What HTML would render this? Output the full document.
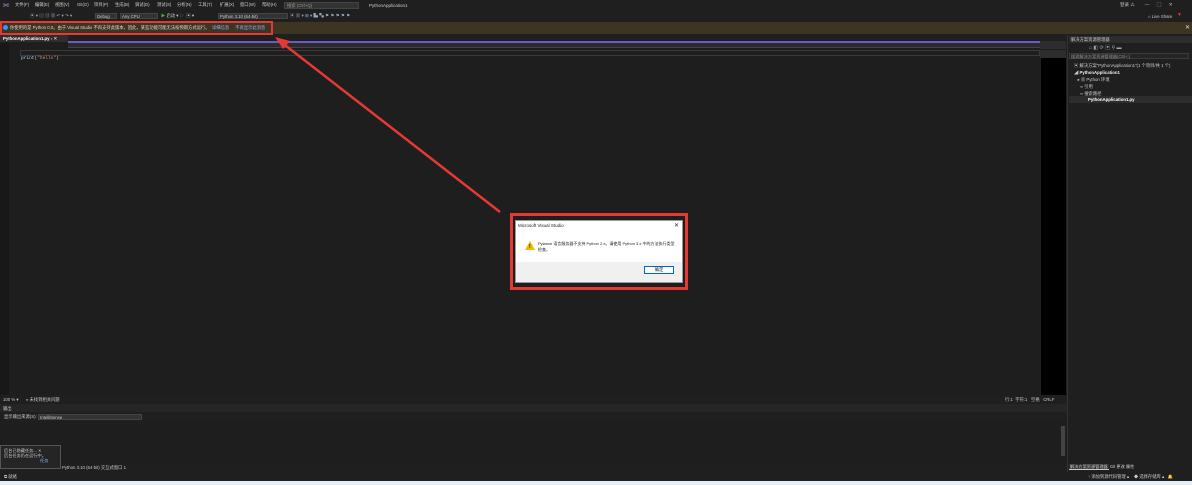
<!DOCTYPE html>
<html><head><meta charset="utf-8"><style>
*{margin:0;padding:0;box-sizing:border-box}
body{width:1192px;height:485px;background:#1f1f1f;overflow:hidden;position:relative;font-family:"Liberation Sans","Noto Sans CJK SC",sans-serif;font-size:5px;color:#ccc}
.a{position:absolute;white-space:nowrap}
.m{position:absolute;top:2px;font-size:4.3px;white-space:nowrap}
</style></head><body>
<!-- menu bar -->
<div class="a" style="left:0;top:0;width:1192px;height:10px;background:#1f1f1f"></div>
<div class="a" style="left:3px;top:2px;color:#b180d7;font-size:6px">⋈</div>
<span class="m" style="left:15px">文件(F)</span><span class="m" style="left:35px">编辑(E)</span><span class="m" style="left:55px">视图(V)</span><span class="m" style="left:77px">Git(G)</span><span class="m" style="left:94px">项目(P)</span><span class="m" style="left:115px">生成(B)</span><span class="m" style="left:135px">调试(D)</span><span class="m" style="left:157px">测试(S)</span><span class="m" style="left:177px">分析(N)</span><span class="m" style="left:198px">工具(T)</span><span class="m" style="left:220px">扩展(X)</span><span class="m" style="left:240px">窗口(W)</span><span class="m" style="left:262px">帮助(H)</span>
<div class="a" style="left:284px;top:2px;width:75px;height:7px;background:#333;border:1px solid #444;color:#999;padding-left:2px;font-size:4.3px">搜索 (Ctrl+Q)</div>
<div class="a" style="left:369px;top:3px;font-size:4.5px">PythonApplication1</div>
<div class="a" style="left:1120px;top:2px;font-size:4.5px">登录 ⁂ &nbsp;&nbsp;&nbsp;&nbsp;&nbsp;&nbsp;&nbsp;— &nbsp;&nbsp;&nbsp;&nbsp;&nbsp;▢ &nbsp;&nbsp;&nbsp;&nbsp;&nbsp;✕</div>
<!-- toolbar -->
<div class="a" style="left:95px;top:13px;width:22px;height:6px;background:#333;border:1px solid #444;font-size:4.3px;padding-left:1px">Debug</div>
<div class="a" style="left:120px;top:13px;width:38px;height:6px;background:#333;border:1px solid #444;font-size:4.3px;padding-left:1px">Any CPU</div>
<div class="a" style="left:161px;top:13px;font-size:4.3px"><span style="color:#4caf50">▶</span> 启动 ▾ <span style="color:#4caf50">▷</span> &nbsp;▣ ▾</div>
<div class="a" style="left:218px;top:13px;width:70px;height:6px;background:#333;border:1px solid #444;font-size:4.3px;padding-left:1px">Python 3.10 (64-bit)</div>
<div class="a" style="left:30px;top:13px;width:60px;height:6px;color:#9ab;font-size:4.5px">▣ ▾ ▤ ▥ ▦ ↶ ▾ ↷ ▾</div>
<div class="a" style="left:290px;top:13px;color:#9ab;font-size:4.5px">▣ ▦ ▾ ⊞ ▾ ▙ ▚ ⚑ ⚑ ⚑ ⚑ ⚑</div>
<div class="a" style="left:1148px;top:14px;font-size:4.3px">⌂ Live Share</div>
<div class="a" style="left:1177px;top:12px;color:#e33;font-size:5px">▼</div>
<!-- info bar -->
<div class="a" style="left:0;top:22px;width:1192px;height:12px;background:#3d3421"></div>
<div class="a" style="left:3px;top:25px;width:5px;height:5px;border-radius:50%;background:#3794ff"></div>
<div class="a" style="left:10px;top:25px;font-size:4.3px;color:#ddd">你使用的是 Python 0.0。由于 Visual Studio 不再支持此版本，因此，某些功能可能无法按预期方式运行。</div>
<div class="a" style="left:212px;top:25px;font-size:4.3px;color:#8ab4f8">详细信息 &nbsp;&nbsp;&nbsp;&nbsp;不再显示此消息</div>
<div class="a" style="left:1185px;top:24px;font-size:6px;color:#ddd">✕</div>
<div class="a" style="left:0;top:21px;width:273px;height:14px;border:2px solid #e53935"></div>
<!-- tab row -->
<div class="a" style="left:0;top:35px;width:68px;height:7px;background:#2d2d2d;font-size:4.3px;padding:1px 0 0 3px;color:#fff;font-weight:bold">PythonApplication1.py <span style="font-weight:normal">▫ ✕</span></div>
<div class="a" style="left:68px;top:41px;width:972px;height:2px;background:#6a5acd"></div>
<div class="a" style="left:1040px;top:41px;width:26px;height:8px;background:#2d2d2d"></div>
<!-- editor -->
<div class="a" style="left:0;top:43px;width:1040px;height:352px;background:#1e1e1e"></div>
<div class="a" style="left:0;top:43px;width:9px;height:352px;background:#181818"></div>
<div class="a" style="left:68px;top:43px;width:972px;height:5px;background:#2b2b2b;border-bottom:1px solid #444"></div>
<div class="a" style="left:20px;top:50px;width:1020px;height:6px;border:1px solid #3a3a3a"></div>
<div class="a" style="left:21px;top:56px;font-family:'Liberation Mono',monospace;font-size:4.5px;color:#9cdcfe">print<span style="color:#ccc">(</span><span style="color:#ce9178">"hello"</span><span style="color:#ccc">)</span></div>
<div class="a" style="left:1040px;top:50px;width:26px;height:8px;background:#2d2d2d"></div>
<div class="a" style="left:1041px;top:58px;width:25px;height:337px;background:#000"></div>
<!-- editor status -->
<div class="a" style="left:0;top:395px;width:1067px;height:8px;background:#1f1f1f;font-size:4.3px;padding:2px 0 0 3px">100 % ▾ &nbsp;&nbsp;&nbsp;&nbsp;&nbsp;<span style="color:#4caf50">●</span> 未找到相关问题</div>
<div class="a" style="left:1005px;top:397px;font-size:4.3px">行:1 &nbsp;字符:1 &nbsp;&nbsp;空格 &nbsp;&nbsp;CRLF</div>
<!-- output panel -->
<div class="a" style="left:0;top:404px;width:1067px;height:8px;background:#252526;font-size:4.3px;padding:2px 0 0 3px">输出</div>
<div class="a" style="left:0;top:412px;width:1067px;height:9px;background:#1f1f1f;font-size:4.3px;padding:2px 0 0 4px">显示输出来源(S): </div>
<div class="a" style="left:38px;top:414px;width:104px;height:6px;background:#333;border:1px solid #444;font-size:4.3px;padding-left:1px">IntelliSense</div>
<div class="a" style="left:0;top:421px;width:1067px;height:42px;background:#1e1e1e"></div>
<div class="a" style="left:1061px;top:426px;width:4px;height:30px;background:#444"></div>
<div class="a" style="left:0;top:463px;width:1067px;height:8px;background:#1f1f1f;font-size:4.3px;padding:2px 0 0 62px">Python 3.10 (64-bit) 交互式窗口 1</div>
<!-- notification -->
<div class="a" style="left:0;top:445px;width:61px;height:24px;background:#252526;border:1px solid #555;font-size:4.2px;padding:2px 3px;line-height:5px;white-space:normal">后台已隐藏任务... ✕<br>后台任务仍在运行中。<br><span style="color:#8ab4f8;padding-left:36px">任务</span></div>
<!-- right panel -->
<div class="a" style="left:1067px;top:35px;width:125px;height:437px;background:#1f1f1f;border-left:1px solid #333"></div>
<div class="a" style="left:1069px;top:36px;width:123px;height:7px;background:#2d2d2d;font-size:4.3px;padding:1px 2px">解决方案资源管理器</div>
<div class="a" style="left:1069px;top:43px;width:123px;height:9px;color:#9ab;font-size:5px;padding:1px 20px">⌂ ◧ ⟳ ▣ ⚲ ▬</div>
<div class="a" style="left:1069px;top:53px;width:120px;height:6px;background:#252526;border:1px solid #3a3a3a;font-size:4.2px;color:#999;padding-left:1px">搜索解决方案资源管理器(Ctrl+;)</div>
<div class="a" style="left:1074px;top:62px;font-size:4.3px;line-height:7px">▣ 解决方案"PythonApplication1"(1 个项目/共 1 个)<br>◢ <b style="color:#eee">PythonApplication1</b><br>&nbsp;&nbsp;&nbsp;▸ ▦ Python 环境<br>&nbsp;&nbsp;&nbsp;&nbsp;&nbsp;∞ 引用<br>&nbsp;&nbsp;&nbsp;&nbsp;&nbsp;∞ 搜索路径</div>
<div class="a" style="left:1069px;top:96px;width:123px;height:7px;background:#2d2d2d;font-size:4.3px;padding:1px 19px;color:#fff;font-weight:bold">PythonApplication1.py</div>
<div class="a" style="left:1069px;top:464px;font-size:4.2px"><span style="background:#2d2d2d;border-bottom:1px solid #ccc;padding:0 1px">解决方案资源管理器</span> Git 更改 属性</div>
<!-- status bar -->
<div class="a" style="left:0;top:472px;width:1192px;height:9px;background:#1f1f1f;font-size:4.3px;padding:2px 4px">⧉ 就绪</div>
<div class="a" style="left:1088px;top:474px;font-size:4.3px">↑ 添加到源代码管理 ▴ &nbsp;&nbsp;&nbsp;◆ 选择存储库 ▴ &nbsp;&nbsp;🔔</div>
<div class="a" style="left:0;top:481px;width:1192px;height:4px;background:#e8eef6"></div>
<!-- dialog -->
<div class="a" style="left:510px;top:213px;width:178px;height:77px;border:3px solid #e53935;background:#1e1e1e"></div>
<div class="a" style="left:515px;top:220px;width:168px;height:63px;background:#fff;border:1px solid #999"></div>
<div class="a" style="left:518px;top:223px;font-size:4.5px;color:#222">Microsoft Visual Studio</div>
<div class="a" style="left:674px;top:222px;font-size:6px;color:#333">✕</div>
<div class="a" style="left:525px;top:241px;width:0;height:0;border-left:5px solid transparent;border-right:5px solid transparent;border-bottom:9px solid #f3b900"></div>
<div class="a" style="left:529px;top:244px;font-size:5px;color:#000;font-weight:bold">!</div>
<div class="a" style="left:538px;top:241px;font-size:4px;color:#222;line-height:6px">Pylance 语言服务器不支持 Python 2.x。请使用 Python 3.x 中的方法执行类型<br>检查。</div>
<div class="a" style="left:516px;top:262px;width:166px;height:20px;background:#f0f0f0"></div>
<div class="a" style="left:644px;top:266px;width:30px;height:8px;background:#fdfdfd;border:1px solid #0067c0;font-size:4.3px;color:#222;text-align:center;line-height:6px">确定</div>
<!-- arrow -->
<svg class="a" style="left:0;top:0" width="1192" height="485"><line x1="500" y1="212" x2="281" y2="42" stroke="#e53935" stroke-width="2.5"/><polygon points="275,37 290,41 283,49" fill="#e53935"/></svg>
</body></html>
